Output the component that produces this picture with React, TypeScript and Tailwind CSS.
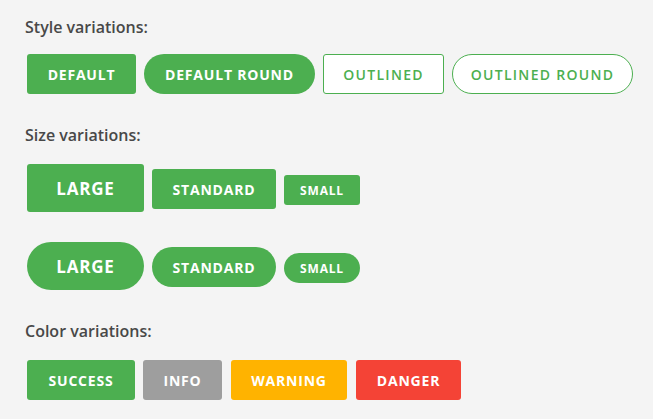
const font = { fontFamily: '"Open Sans", "Noto Sans", sans-serif' };

const base =
  "inline-flex items-center justify-center font-bold uppercase tracking-[0.8px] text-white";
const outline =
  "inline-flex h-[40px] items-center justify-center border border-[#4caf50] bg-white text-[14px] font-semibold uppercase tracking-[1.3px] text-[#4caf50]";

function Title({ children }: { children: string }) {
  return (
    <h2 className="text-[16px] leading-[24px] font-semibold text-[#484848]">{children}</h2>
  );
}

export default function App() {
  return (
    <div
      className="min-h-[419px] w-[653px] bg-[#f4f4f4] pl-[25px] pt-[15px]"
      style={font}
    >
      <Title>Style variations:</Title>
      <div className="mt-[15px] flex items-center gap-[8px] pl-[2px]">
        <button className={`${base} h-[40px] w-[109px] rounded-[3px] bg-[#4caf50] text-[14px]`}>
          Default
        </button>
        <button className={`${base} h-[40px] w-[171px] rounded-full bg-[#4caf50] text-[14px]`}>
          Default round
        </button>
        <button className={`${outline} w-[121px] rounded-[3px]`}>Outlined</button>
        <button className={`${outline} w-[181px] rounded-full`}>Outlined round</button>
      </div>

      <div className="mt-[29px]">
        <Title>Size variations:</Title>
      </div>
      <div className="mt-[17px] flex items-center gap-[8px] pl-[2px]">
        <button className={`${base} h-[48px] w-[117px] rounded-[3px] bg-[#4caf50] pt-[2px] text-[17px]`}>
          Large
        </button>
        <button className={`${base} mt-[2px] h-[40px] w-[124px] rounded-[3px] bg-[#4caf50] text-[14px]`}>
          Standard
        </button>
        <button className={`${base} mt-[4px] h-[30px] w-[76px] rounded-[3px] bg-[#4caf50] pt-[1px] text-[12px]`}>
          Small
        </button>
      </div>
      <div className="mt-[30px] flex items-center gap-[8px] pl-[2px]">
        <button className={`${base} h-[48px] w-[117px] rounded-full bg-[#4caf50] pt-[2px] text-[17px]`}>
          Large
        </button>
        <button className={`${base} mt-[2px] h-[40px] w-[124px] rounded-full bg-[#4caf50] text-[14px]`}>
          Standard
        </button>
        <button className={`${base} mt-[4px] h-[30px] w-[76px] rounded-full bg-[#4caf50] pt-[1px] text-[12px]`}>
          Small
        </button>
      </div>

      <div className="mt-[29px]">
        <Title>Color variations:</Title>
      </div>
      <div className="mt-[17px] flex items-center gap-[8px] pl-[2px]">
        <button className={`${base} h-[40px] w-[108px] rounded-[3px] bg-[#4caf50] text-[14px]`}>
          Success
        </button>
        <button className={`${base} h-[40px] w-[79px] rounded-[3px] bg-[#9e9e9e] text-[14px]`}>
          Info
        </button>
        <button className={`${base} ml-[1px] h-[40px] w-[116px] rounded-[3px] bg-[#ffb300] text-[14px]`}>
          Warning
        </button>
        <button className={`${base} ml-[1px] h-[40px] w-[105px] rounded-[3px] bg-[#f44336] text-[14px]`}>
          Danger
        </button>
      </div>
    </div>
  );
}
